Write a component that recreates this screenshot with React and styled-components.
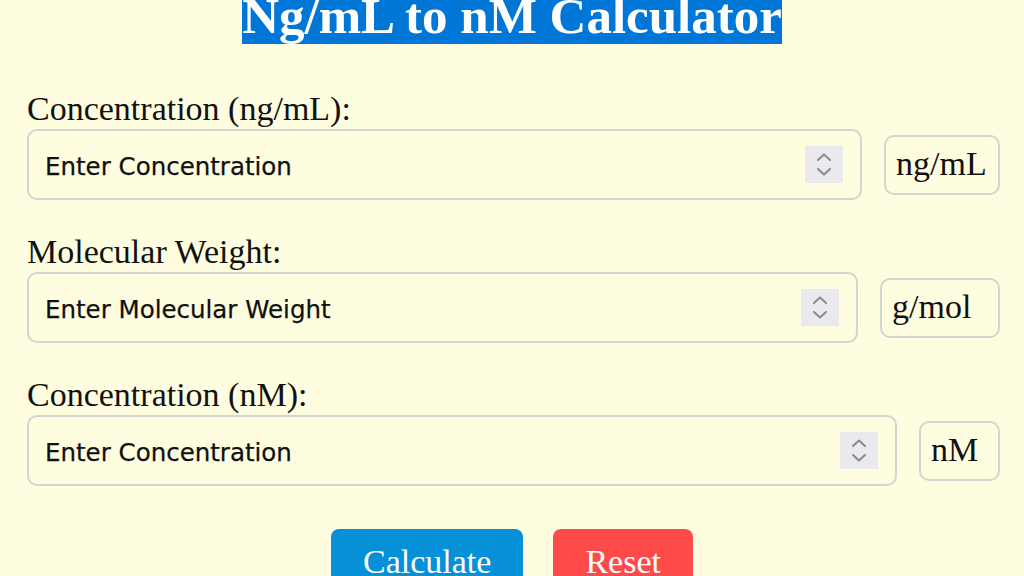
import React, { useState } from 'react';
import styled, { createGlobalStyle } from 'styled-components';

const GlobalStyle = createGlobalStyle`
	html, body {
		margin: 0;
		padding: 0;
		background: #fefddf;
		overflow: hidden;
	}
	body {
		font-family: "Liberation Serif", "Times New Roman", serif;
		color: #111;
	}
`;

const fields = [
	{ id: 'ng', label: 'Concentration (ng/mL):', placeholder: 'Enter Concentration', unit: 'ng/mL', unitWidth: 116 },
	{ id: 'mw', label: 'Molecular Weight:', placeholder: 'Enter Molecular Weight', unit: 'g/mol', unitWidth: 120 },
	{ id: 'nm', label: 'Concentration (nM):', placeholder: 'Enter Concentration', unit: 'nM', unitWidth: 81 }
];

const Spinner = () => (
	<SpinBox>
		<svg width="38" height="37" viewBox="0 0 38 37" fill="none">
			<path d="M13 14 L19 8.5 L25 14" stroke="#8a8a8e" strokeWidth="2" strokeLinecap="round" strokeLinejoin="round" />
			<path d="M13 23 L19 28.5 L25 23" stroke="#8a8a8e" strokeWidth="2" strokeLinecap="round" strokeLinejoin="round" />
		</svg>
	</SpinBox>
);

const App = () => {
	const [ values, setValues ] = useState({ ng: '', mw: '', nm: '' });

	const onChange = e => setValues({ ...values, [e.target.name]: e.target.value });
	const onReset = () => setValues({ ng: '', mw: '', nm: '' });

	return (
		<Page>
			<GlobalStyle />
			<Title>
				<Highlight>Ng/mL to nM Calculator</Highlight>
			</Title>
			<Form onSubmit={e => e.preventDefault()}>
				{fields.map(f => (
					<Group key={f.id}>
						<Label htmlFor={f.id}>{f.label}</Label>
						<Row>
							<InputBox>
								<Input
									id={f.id}
									name={f.id}
									type="text"
									placeholder={f.placeholder}
									value={values[f.id]}
									onChange={onChange}
								/>
								<Spinner />
							</InputBox>
							<Unit width={f.unitWidth}>{f.unit}</Unit>
						</Row>
					</Group>
				))}
				<Buttons>
					<Button type="submit" color="#0590d8">Calculate</Button>
					<Button type="button" color="#ff4a4a" onClick={onReset}>Reset</Button>
				</Buttons>
			</Form>
		</Page>
	);
};

export default App;

const Page = styled.div`
	width: 1024px;
	height: 576px;
	overflow: hidden;
`;

const Title = styled.h1`
	margin: -13px 0 45px;
	font-size: 51px;
	font-weight: bold;
	text-align: center;
	line-height: normal;
`;

const Highlight = styled.span`
	background: #0077d6;
	color: #fff;
`;

const Form = styled.form`
	margin: 0;
`;

const Group = styled.div`
	padding: 0 24px 0 27px;
	margin-bottom: 33px;
	&:nth-of-type(3) {
		margin-bottom: 43px;
	}
`;

const Label = styled.label`
	display: block;
	font-size: 34px;
	line-height: 38px;
	margin-bottom: 1px;
`;

const Row = styled.div`
	display: flex;
	align-items: center;
	gap: 22px;
`;

const InputBox = styled.div`
	flex: 1;
	display: flex;
	align-items: center;
	height: 71px;
	box-sizing: border-box;
	border: 2px solid #d4d4d0;
	border-radius: 10px;
	padding: 0 17px 0 16px;
`;

const Input = styled.input`
	flex: 1;
	min-width: 0;
	border: none;
	outline: none;
	background: transparent;
	font-family: "DejaVu Sans", Verdana, sans-serif;
	font-size: 24.5px;
	color: #111;
	padding: 4px 0 0;
	-webkit-text-stroke: 0.25px #111;
	&::placeholder {
		color: #111;
		opacity: 1;
	}
`;

const SpinBox = styled.span`
	display: flex;
	width: 38px;
	height: 37px;
	background: #e9e9ee;
`;

const Unit = styled.div`
	width: ${p => p.width}px;
	height: 60px;
	box-sizing: border-box;
	display: flex;
	align-items: center;
	padding-left: 10px;
	border: 2px solid #d4d4d0;
	border-radius: 10px;
	font-size: 34px;
	padding-bottom: 2px;
`;

const Buttons = styled.div`
	display: flex;
	justify-content: center;
	gap: 30px;
`;

const Button = styled.button`
	background: ${p => p.color};
	color: #fff;
	border: none;
	border-radius: 8px;
	padding: 14px 32px;
	font-family: "Liberation Serif", "Times New Roman", serif;
	font-size: 34px;
	line-height: normal;
	cursor: pointer;
`;
